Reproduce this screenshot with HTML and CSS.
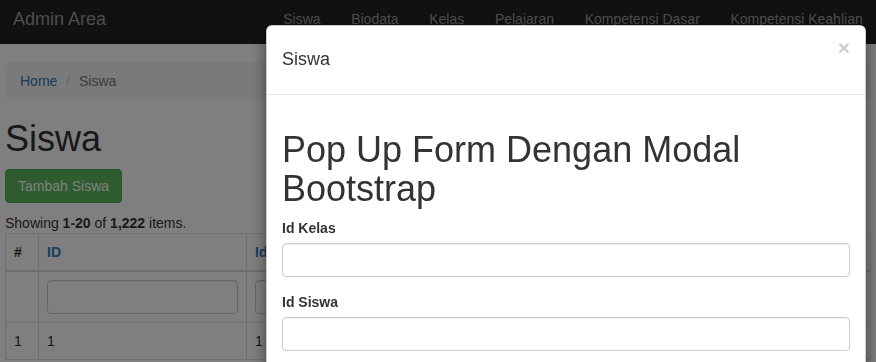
FILE: index.html
```html
<!DOCTYPE html>
<html lang="en">

<head>
  <meta charset="UTF-8">
  <meta name="viewport" content="width=device-width, initial-scale=1.0">
  <title>Siswa</title>
  <link rel="stylesheet" href="styles.css">
</head>

<body>
  <header class="navbar">
    <a class="brand" href="#">Admin Area</a>
    <nav class="nav">
      <a class="nav-item" href="#">Siswa</a>
      <a class="nav-item" href="#">Biodata</a>
      <a class="nav-item" href="#">Kelas</a>
      <a class="nav-item" href="#">Pelajaran</a>
      <a class="nav-item" href="#">Kompetensi Dasar</a>
      <a class="nav-item" href="#">Kompetensi Keahlian</a>
    </nav>
  </header>

  <main class="container">
    <ul class="breadcrumb">
      <li><a href="#">Home</a></li>
      <li class="active">Siswa</li>
    </ul>

    <h1 class="page-title">Siswa</h1>
    <p class="actions"><a class="btn btn-success" href="#">Tambah Siswa</a></p>

    <div class="summary">Showing <b>1-20</b> of <b>1,222</b> items.</div>
    <table class="grid">
      <colgroup>
        <col class="col-num">
        <col class="col-data">
        <col class="col-data">
        <col class="col-data">
        <col class="col-data">
      </colgroup>
      <thead>
        <tr>
          <th>#</th>
          <th><a href="#">ID</a></th>
          <th><a href="#">Id Kelas</a></th>
          <th><a href="#">Id Siswa</a></th>
          <th><a href="#">Nama</a></th>
        </tr>
        <tr class="filters">
          <td></td>
          <td><input class="form-control" type="text"></td>
          <td><input class="form-control" type="text"></td>
          <td><input class="form-control" type="text"></td>
          <td><input class="form-control" type="text"></td>
        </tr>
      </thead>
      <tbody>
        <tr>
          <td>1</td>
          <td>1</td>
          <td>1</td>
          <td>1</td>
          <td>Siswa</td>
        </tr>
      </tbody>
    </table>
  </main>

  <div class="backdrop"></div>

  <div class="modal">
    <div class="modal-header">
      <h4 class="modal-title">Siswa</h4>
      <button class="close" type="button">&times;</button>
    </div>
    <div class="modal-body">
      <h1 class="modal-heading">Pop Up Form Dengan Modal Bootstrap</h1>
      <form>
        <div class="form-group">
          <label for="id-kelas">Id Kelas</label>
          <input class="form-control" id="id-kelas" type="text">
        </div>
        <div class="form-group">
          <label for="id-siswa">Id Siswa</label>
          <input class="form-control" id="id-siswa" type="text">
        </div>
      </form>
    </div>
  </div>
</body>

</html>
```

FILE: styles.css
```css
:root {
  --txt-color: #333;
  --link-color: #337ab7;
  --border-color: #ddd;
}

* {
  margin: 0;
  padding: 0;
  box-sizing: border-box;
}

body {
  font-family: "Liberation Sans", Arial, Helvetica, sans-serif;
  font-size: 14px;
  line-height: 20px;
  color: var(--txt-color);
  background-color: #fff;
  overflow: hidden;
}

a {
  color: var(--link-color);
  text-decoration: none;
}

/* navbar */
.navbar {
  height: 44px;
  display: flex;
  justify-content: space-between;
  align-items: flex-start;
  background-color: #222;
}

.brand {
  padding: 9px 13px;
  font-size: 18px;
  line-height: 20px;
  color: #9d9d9d;
}

.nav {
  display: flex;
  margin-right: -2px;
}

.nav-item {
  padding: 9px 15.3px;
  color: #9d9d9d;
  white-space: nowrap;
}

/* page */
.container {
  padding: 0 5px;
}

.breadcrumb {
  list-style: none;
  margin-top: 19px;
  padding: 8px 15px;
  background-color: #f5f5f5;
  border-radius: 4px;
}

.breadcrumb li {
  display: inline;
}

.breadcrumb li + li::before {
  content: "/\00a0";
  padding: 0 5px;
  color: #ccc;
}

.breadcrumb .active {
  color: #777;
}

.page-title {
  margin: 20px 0 10px;
  font-size: 36px;
  font-weight: 500;
  line-height: 1.1;
}

.actions {
  margin-bottom: 10px;
}

.btn {
  display: inline-block;
  padding: 6px 12px;
  border: 1px solid transparent;
  border-radius: 4px;
  line-height: 20px;
}

.btn-success {
  color: #fff;
  background-color: #5cb85c;
  border-color: #4cae4c;
}

.grid {
  width: 100%;
  table-layout: fixed;
  border-collapse: collapse;
  border: 1px solid var(--border-color);
}

.col-num {
  width: 33px;
}

.col-data {
  width: 208px;
}

.grid th,
.grid td {
  padding: 8px;
  text-align: left;
  vertical-align: top;
  border: 1px solid var(--border-color);
  white-space: nowrap;
  overflow: hidden;
}

.grid th {
  vertical-align: bottom;
  border-bottom-width: 2px;
}

.form-control {
  display: block;
  width: 100%;
  height: 34px;
  padding: 6px 12px;
  font: inherit;
  color: #555;
  background-color: #fff;
  border: 1px solid #ccc;
  border-radius: 4px;
  box-shadow: inset 0 1px 1px rgba(0, 0, 0, 0.075);
}

/* modal */
.backdrop {
  position: fixed;
  inset: 0;
  background-color: rgba(0, 0, 0, 0.5);
}

.modal {
  position: fixed;
  left: 266px;
  top: 25px;
  width: 600px;
  background-color: #fff;
  border: 1px solid rgba(0, 0, 0, 0.2);
  border-radius: 6px;
  box-shadow: 0 5px 15px rgba(0, 0, 0, 0.5);
}

.modal-header {
  display: flex;
  justify-content: space-between;
  align-items: flex-start;
  padding: 21px 15px 21px;
  border-bottom: 1px solid #e5e5e5;
}

.modal-title {
  font-size: 18px;
  font-weight: 500;
  line-height: 1.42857;
}

.close {
  margin-top: -10px;
  font-family: inherit;
  font-size: 21px;
  font-weight: bold;
  line-height: 1;
  color: #000;
  opacity: 0.2;
  background: none;
  border: 0;
  cursor: pointer;
}

.modal-body {
  padding: 15px;
}

.modal-heading {
  margin: 20px 0 9px;
  font-size: 36px;
  font-weight: 500;
  line-height: 1.1;
}

.form-group {
  margin-bottom: 15px;
}

.form-group label {
  display: inline-block;
  margin-bottom: 5px;
  font-weight: bold;
}
```
